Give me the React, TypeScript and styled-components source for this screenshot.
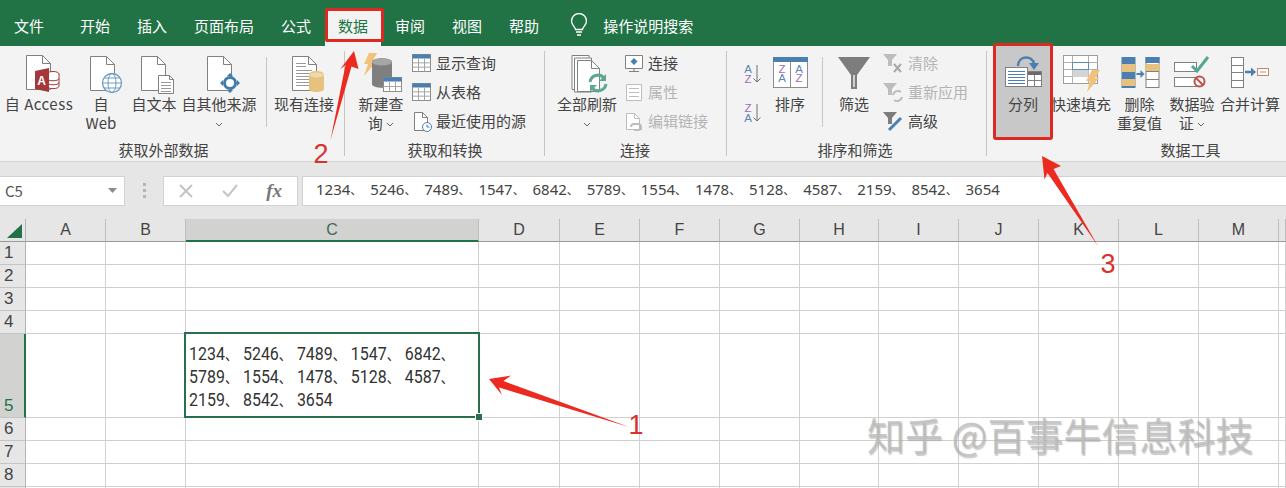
import React from "react";
import styled, { createGlobalStyle } from "styled-components";

const GREEN = "#217346";
const RED = "#dc2a22";
const ARROW = "#ec2a20";
const BLUE = "#4a7fb0";
const GRAY = "#808080";
const FAINT = "#bdbdbd";

const GlobalStyle = createGlobalStyle`
  html, body {
    margin: 0;
    padding: 0;
    background: #fff;
  }
  body {
    font-family: "Noto Sans CJK SC", "Noto Sans", sans-serif;
    color: #444;
  }
  svg {
    display: block;
    flex: none;
  }
`;

// drawings use page coordinates, the viewBox picks the part of the page they sit on
const Art: React.FC<{ x: number; y: number; w: number; h: number; children: React.ReactNode }> = ({
  x,
  y,
  w,
  h,
  children,
}) => (
  <svg viewBox={`${x} ${y} ${w} ${h}`} width={w} height={h}>
    {children}
  </svg>
);

const BigArt: React.FC<{ cx: number; children: React.ReactNode }> = ({ cx, children }) => (
  <Art x={cx - 30} y={48} w={60} h={46}>
    {children}
  </Art>
);

const SmallArt: React.FC<{ x: number; y: number; children: React.ReactNode }> = ({ x, y, children }) => (
  <Art x={x} y={y} w={22} h={22}>
    {children}
  </Art>
);

const Doc: React.FC<{ x: number; y: number; w: number; h: number; fold?: number; color?: string }> = ({
  x,
  y,
  w,
  h,
  fold = 8,
  color = GRAY,
}) => (
  <g fill="#fff" stroke={color}>
    <path d={`M${x} ${y}h${w - fold}l${fold} ${fold}v${h - fold}h${-w}z`} />
    <path d={`M${x + w - fold} ${y}v${fold}h${fold}`} fill="none" />
  </g>
);

const Lines: React.FC<{ x: number; y: number; w: number; n: number; gap?: number; color?: string }> = ({
  x,
  y,
  w,
  n,
  gap = 3,
  color = "#9a9a9a",
}) => (
  <g stroke={color}>
    {Array.from({ length: n }).map((_, i) => (
      <path key={i} d={`M${x} ${y + i * gap + 0.5}h${w}`} />
    ))}
  </g>
);

const MiniTable: React.FC<{ x: number; y: number; w: number; h: number; cols?: number; rows?: number; head?: number }> = ({
  x,
  y,
  w,
  h,
  cols = 2,
  rows = 3,
  head = 4,
}) => (
  <g>
    <rect x={x} y={y} width={w} height={h} fill="#fff" stroke="#8c8c8c" />
    <rect x={x} y={y} width={w} height={head} fill={BLUE} />
    {Array.from({ length: cols - 1 }).map((_, i) => (
      <path key={i} d={`M${x + ((i + 1) * w) / cols} ${y + head}v${h - head}`} stroke="#a5a5a5" />
    ))}
    {Array.from({ length: rows - 1 }).map((_, i) => (
      <path key={i} d={`M${x} ${y + head + ((i + 1) * (h - head)) / rows}h${w}`} stroke="#a5a5a5" />
    ))}
  </g>
);

const Funnel: React.FC<{ x: number; y: number; color: string }> = ({ x, y, color }) => (
  <g fill={color}>
    <path d={`M${x} ${y}h14l-5 6v6h-4v-6z`} />
  </g>
);

const Caret = () => (
  <svg width="8" height="5" viewBox="0 0 8 5">
    <path d="M1 1l3 3 3-3" fill="none" stroke="#666" />
  </svg>
);

const LetterPair: React.FC<{ x: number; y: number; top: string; bottom: string; topColor: string; bottomColor: string }> = ({
  x,
  y,
  top,
  bottom,
  topColor,
  bottomColor,
}) => (
  <g fontFamily="Liberation Sans, sans-serif" fontSize="11.500" textAnchor="middle">
    <text x={x} y={y + 9} fill={topColor}>
      {top}
    </text>
    <text x={x} y={y + 18.500} fill={bottomColor}>
      {bottom}
    </text>
  </g>
);

const SortSmall: React.FC<{ y: number; top: string; bottom: string; topColor: string; bottomColor: string }> = ({
  y,
  top,
  bottom,
  topColor,
  bottomColor,
}) => (
  <Art x={741} y={y} w={24} h={22}>
    <LetterPair x={748} y={y + 1} top={top} bottom={bottom} topColor={topColor} bottomColor={bottomColor} />
    <path d={`M757 ${y + 2}v17M753.5 ${y + 15.5}l3.5 3.5 3.5-3.5`} fill="none" stroke="#707070" />
  </Art>
);

const numbers = [
  "1234", "5246", "7489", "1547", "6842", "5789", "1554",
  "1478", "5128", "4587", "2159", "8542", "3654",
];
const columns = [
  { name: "A", width: 80 },
  { name: "B", width: 80 },
  { name: "C", width: 293 },
  { name: "D", width: 81 },
  { name: "E", width: 80 },
  { name: "F", width: 80 },
  { name: "G", width: 80 },
  { name: "H", width: 79 },
  { name: "I", width: 80 },
  { name: "J", width: 80 },
  { name: "K", width: 80 },
  { name: "L", width: 80 },
  { name: "M", width: 80 },
  { name: "", width: 7 },
];
const rows = [
  { name: "1", height: 23 },
  { name: "2", height: 23 },
  { name: "3", height: 23 },
  { name: "4", height: 23 },
  { name: "5", height: 84 },
  { name: "6", height: 23 },
  { name: "7", height: 23 },
  { name: "8", height: 23 },
  { name: "", height: 23 },
];
const tabs = ["开始", "插入", "页面布局", "公式", "数据", "审阅", "视图", "帮助"];

const Numbers: React.FC<{ items: string[]; trailing?: boolean; gap: number }> = ({ items, trailing, gap }) => (
  <>
    {items.map((n, i) => (
      <React.Fragment key={n}>
        {n}
        {(trailing || i < items.length - 1) && <Sep $w={gap}>、</Sep>}
      </React.Fragment>
    ))}
  </>
);

const App: React.FC = () => (
  <Page>
    <GlobalStyle />
    <TabBar>
      <FileTab>文件</FileTab>
      {tabs.map((t) => (
        <Tab key={t} $active={t === "数据"}>
          {t}
        </Tab>
      ))}
      <SearchHint>
        <svg width="18" height="24" viewBox="0 0 18 24">
          <path
            d="M5.5 16.5C5 13.5 1.5 12 1.5 8a7.5 7.5 0 0 1 15 0c0 4-3.500 5.500-4 8.500z"
            fill="none"
            stroke="#fff"
            strokeWidth="1.300"
          />
          <path d="M6 19h6M7 22h4" stroke="#fff" strokeWidth="1.300" />
        </svg>
        操作说明搜索
      </SearchHint>
    </TabBar>

    <Ribbon>
      <Group $w={345}>
        <GroupBody>
          <BigButton $w={78}>
            <BigArt cx={39}>
              <Doc x={26.5} y={55.5} w={24} h={34} />
              <g fill="#fff" stroke="#a4373a">
                <ellipse cx="53" cy="74" rx="6" ry="2.500" />
                <path d="M47 74v12c0 3.500 12 3.500 12 0V74M47 78.500c0 3 12 3 12 0M47 82.500c0 3 12 3 12 0" />
              </g>
              <path d="M35 71l14-3v24l-14-3z" fill="#a4373a" />
              <text x="41.500" y="85" fill="#fff" fontFamily="Liberation Sans, sans-serif" fontWeight="700" fontSize="12" textAnchor="middle">
                A
              </text>
            </BigArt>
            <WideLabel>自 Access</WideLabel>
          </BigButton>
          <BigButton $w={46}>
            <BigArt cx={101}>
              <Doc x={90.5} y={56.5} w={24} h={34} />
              <circle cx="112" cy="83" r="9.500" fill="#fff" stroke="#6f9cc4" strokeWidth="1.300" />
              <ellipse cx="112" cy="83" rx="4" ry="9.500" fill="none" stroke="#6f9cc4" />
              <path d="M102.500 83h19M104 78h16M104 88h16" stroke="#6f9cc4" />
            </BigArt>
            <Label>
              自<br />
              Web
            </Label>
          </BigButton>
          <BigButton $w={60}>
            <BigArt cx={154}>
              <Doc x={141.5} y={56.5} w={24} h={34} />
              <Doc x={158.5} y={75.5} w={15} h={18} fold={4} />
              <Lines x={161} y={82} w={10} n={4} />
            </BigArt>
            <Label>自文本</Label>
          </BigButton>
          <BigButton $w={70}>
            <BigArt cx={219}>
              <Doc x={207.5} y={56.5} w={24} h={34} />
              <circle cx="230" cy="83" r="5.500" fill="#fff" stroke="#3f7cac" strokeWidth="3" />
              <path d="M230 73l-3 3h6zM230 93l-3-3h6zM220 83l3-3v6zM240 83l-3-3v6z" fill="#3f7cac" />
            </BigArt>
            <Label>
              自其他来源
              <br />
              <Caret />
            </Label>
          </BigButton>
          <InnerDivider $left={12} />
          <BigButton $w={74}>
            <BigArt cx={303}>
              <Doc x={291.5} y={56.5} w={24} h={34} />
              <Lines x={295} y={63} w={10} n={2} />
              <Lines x={295} y={70} w={16} n={6} />
              <path d="M308 75c0-5.500 15-5.500 15 0v14c0 4-15 4-15 0z" fill="#e6c27e" />
              <ellipse cx="315.500" cy="75" rx="7.500" ry="2.500" fill="#f0d9a8" />
            </BigArt>
            <Label>现有连接</Label>
          </BigButton>
        </GroupBody>
        <GroupLabel $shift={-9}>获取外部数据</GroupLabel>
      </Group>

      <Group $w={200}>
        <GroupBody>
          <BigButton $w={48} $left={12}>
            <BigArt cx={381}>
              <path d="M369 53h8l-5 9h4l-12 14 4-12h-4z" fill="#f2c27a" />
              <path d="M372 62c0-5 20-5 20 0v22c0 5-20 5-20 0z" fill="#7f7f7f" />
              <ellipse cx="382" cy="62" rx="10" ry="3.500" fill="#a6a6a6" />
              <MiniTable x={383.5} y={77.5} w={18} h={14} cols={3} rows={2} />
            </BigArt>
            <Label>
              新建查
              <br />询 <Caret />
            </Label>
          </BigButton>
          <SmallColumn $left={5}>
            <SmallButton>
              <SmallArt x={410} y={53}>
                <MiniTable x={412.5} y={54.5} w={18} h={17} cols={3} rows={3} />
              </SmallArt>
              显示查询
            </SmallButton>
            <SmallButton>
              <SmallArt x={410} y={82}>
                <MiniTable x={412.5} y={83.5} w={18} h={17} cols={3} rows={3} />
              </SmallArt>
              从表格
            </SmallButton>
            <SmallButton>
              <SmallArt x={410} y={111}>
                <Doc x={414.5} y={112.5} w={13} h={18} fold={5} />
                <circle cx="427" cy="127" r="4.500" fill="#fff" stroke={BLUE} />
                <path d="M427 124.500v2.500h2.500" fill="none" stroke={BLUE} />
              </SmallArt>
              最近使用的源
            </SmallButton>
          </SmallColumn>
        </GroupBody>
        <GroupLabel $shift={0}>获取和转换</GroupLabel>
      </Group>

      <Group $w={182}>
        <GroupBody>
          <BigButton $w={60} $left={12}>
            <BigArt cx={587}>
              <g fill="#fff" stroke={GRAY}>
                <path d="M572 55.500h17v34h-17z" />
                <path d="M574.500 58h17v34h-17z" />
              </g>
              <Doc x={577.500} y={60.500} w={22} h={31} />
              <path d="M590 82a8 8 0 0 1 14-4M606 84a8 8 0 0 1-14 4" fill="none" stroke="#5ea893" strokeWidth="3" />
              <path d="M606 74v7h-7zM590 92v-7h7z" fill="#5ea893" />
            </BigArt>
            <Label>
              全部刷新
              <br />
              <Caret />
            </Label>
          </BigButton>
          <SmallColumn $left={5}>
            <SmallButton>
              <SmallArt x={622} y={52}>
                <path d="M625.500 54.500h17v13h-17z" fill="#fff" stroke={GRAY} />
                <path d="M629 70.500h10M634 67.500v3" stroke={GRAY} />
                <path d="M634 57l3.500 3.500-3.500 3.500-3.500-3.500z" fill={BLUE} />
              </SmallArt>
              连接
            </SmallButton>
            <SmallButton $disabled>
              <SmallArt x={622} y={81}>
                <path d="M626.500 83.500h15v16h-15z" fill="#fff" stroke={FAINT} />
                <Lines x={629} y={87} w={10} n={3} gap={4} color={FAINT} />
              </SmallArt>
              属性
            </SmallButton>
            <SmallButton $disabled>
              <SmallArt x={622} y={110}>
                <Doc x={626.5} y={112.5} w={13} h={16} fold={5} color={FAINT} />
                <path d="M631 126a3 3 0 0 1 3-3h4a3 3 0 0 1 0 6h-4M639 128h3" fill="none" stroke={FAINT} strokeWidth="2" />
              </SmallArt>
              编辑链接
            </SmallButton>
          </SmallColumn>
        </GroupBody>
        <GroupLabel $shift={-1}>连接</GroupLabel>
      </Group>

      <Group $w={260}>
        <GroupBody>
          <SortColumn>
            <SortSmall y={63} top="A" bottom="Z" topColor="#5b87b5" bottomColor="#9a6fb0" />
            <SortSmall y={102} top="Z" bottom="A" topColor="#9a6fb0" bottomColor="#5b87b5" />
          </SortColumn>
          <BigButton $w={50}>
            <BigArt cx={790}>
              <rect x="773.500" y="57.500" width="34" height="30" fill="#fff" stroke="#8c8c8c" />
              <rect x="773" y="57" width="35" height="5" fill={BLUE} />
              <path d="M790.500 62v25" stroke="#8c8c8c" />
              <LetterPair x={782} y={63.500} top="Z" bottom="A" topColor="#9a6fb0" bottomColor="#5b87b5" />
              <LetterPair x={799} y={63.500} top="A" bottom="Z" topColor="#5b87b5" bottomColor="#9a6fb0" />
            </BigArt>
            <Label>排序</Label>
          </BigButton>
          <InnerDivider $left={7} />
          <BigButton $w={48} $left={7}>
            <BigArt cx={854}>
              <path d="M838 57h32l-13 18v14h-6V75z" fill="#7d7d7d" />
              <path d="M853 75h2v12h-2z" fill="#d0d0d0" />
            </BigArt>
            <Label>筛选</Label>
          </BigButton>
          <SmallColumn $left={4}>
            <SmallButton $disabled>
              <SmallArt x={884} y={53}>
                <Funnel x={885} y={54} color={FAINT} />
                <path d="M896 64l7 8M903 64l-7 8" stroke="#a9a9a9" strokeWidth="2" />
              </SmallArt>
              清除
            </SmallButton>
            <SmallButton $disabled>
              <SmallArt x={884} y={82}>
                <Funnel x={885} y={83} color={FAINT} />
                <path d="M895 95a5 5 0 0 1 8-3M904 97a5 5 0 0 1-8 3" fill="none" stroke={FAINT} strokeWidth="2" />
              </SmallArt>
              重新应用
            </SmallButton>
            <SmallButton>
              <SmallArt x={884} y={111}>
                <Funnel x={885} y={112} color="#7d7d7d" />
                <path d="M891 130l12-12" stroke={BLUE} strokeWidth="3" />
              </SmallArt>
              高级
            </SmallButton>
          </SmallColumn>
        </GroupBody>
        <GroupLabel $shift={-2}>排序和筛选</GroupLabel>
      </Group>

      <LastGroup>
        <GroupBody>
          <MarkedButton $w={58}>
            <BigArt cx={1023}>
              <rect x="1005.500" y="67.500" width="22" height="19" fill="#fff" stroke={GRAY} />
              <Lines x={1008} y={71} w={17} n={5} color={BLUE} />
              <rect x="1027.500" y="71.500" width="14" height="15" fill="#fff" stroke={GRAY} />
              <rect x="1028" y="72" width="13" height="3" fill="#6b6b6b" />
              <path d="M1034.500 75v11M1028 80.500h13" stroke={GRAY} />
              <path d="M1018 66c0-11 15-11 16-2" fill="none" stroke={BLUE} strokeWidth="2.500" />
              <path d="M1029 63h10l-5 7z" fill={BLUE} />
            </BigArt>
            <Label>分列</Label>
          </MarkedButton>
          <BigButton $w={58}>
            <BigArt cx={1081}>
              <rect x="1063.500" y="55.500" width="34" height="28" fill="#fff" stroke="#9c9c9c" />
              <path d="M1063.500 62.500h34M1063.500 69.500h34M1063.500 76.500h34M1072.500 55.500v28M1088.500 55.500v28" stroke="#b0b0b0" />
              <rect x="1072.500" y="62.500" width="16" height="7" fill="#fff" stroke="#5f8fb8" />
              <rect x="1072.500" y="70" width="16" height="7" fill="#d4d4d4" />
              <path d="M1092 70h8l-5 8h4l-12 14 3-11h-4z" fill="#f2c27a" />
            </BigArt>
            <Label>快速填充</Label>
          </BigButton>
          <BigButton $w={57} $left={1}>
            <BigArt cx={1139.500}>
              <rect x="1121" y="57" width="14" height="31" fill={BLUE} />
              <rect x="1121" y="64" width="14" height="8" fill="#e6c27e" />
              <rect x="1121" y="79" width="14" height="7" fill="#e6c27e" />
              <rect x="1145.500" y="57.500" width="13" height="30" fill="#fff" stroke={GRAY} />
              <rect x="1145" y="57" width="14" height="6" fill={BLUE} />
              <rect x="1145" y="64" width="14" height="7" fill="#e6c27e" />
              <path d="M1145.500 71.500h13M1145.500 79.500h13" stroke={GRAY} />
              <path d="M1136 74h5" stroke={BLUE} strokeWidth="2" />
              <path d="M1140 70l4 4-4 4z" fill={BLUE} />
            </BigArt>
            <Label>
              删除
              <br />
              重复值
            </Label>
          </BigButton>
          <BigButton $w={48}>
            <BigArt cx={1192}>
              <rect x="1174.500" y="62.500" width="22" height="9" fill="#fff" stroke={GRAY} />
              <rect x="1174.500" y="77.500" width="22" height="9" fill="#fff" stroke={GRAY} />
              <path d="M1192 66l5 5 11-14" fill="none" stroke="#57a68e" strokeWidth="3" />
              <circle cx="1199.500" cy="81.500" r="5" fill="#fff" stroke="#c0504d" strokeWidth="2" />
              <path d="M1196 78l7 7" stroke="#c0504d" strokeWidth="2" />
            </BigArt>
            <Label>
              数据验
              <br />证 <Caret />
            </Label>
          </BigButton>
          <BigButton $w={60} $left={4}>
            <BigArt cx={1250}>
              <rect x="1231.500" y="57.500" width="12" height="30" fill="#fff" stroke={GRAY} />
              <path d="M1231.500 65.500h12M1231.500 72.500h12M1231.500 80.500h12" stroke={GRAY} />
              <path d="M1245 72h7" stroke={BLUE} strokeWidth="2.500" />
              <path d="M1251 67.500l5 4.500-5 4.500z" fill={BLUE} />
              <rect x="1257.500" y="68.500" width="11" height="7" fill="#fff" stroke="#c8876a" />
              <path d="M1260 72h6" stroke="#c8876a" />
            </BigArt>
            <Label>合并计算</Label>
          </BigButton>
        </GroupBody>
        <GroupLabel $shift={54}>数据工具</GroupLabel>
      </LastGroup>
    </Ribbon>

    <FormulaBar>
      <NameBox>
        C5
        <svg width="9" height="5" viewBox="0 0 9 5">
          <path d="M0 0h9L4.500 5z" fill="#8a8a8a" />
        </svg>
      </NameBox>
      <Grip>
        <i />
        <i />
        <i />
      </Grip>
      <FxBox>
        <svg width="16" height="16" viewBox="0 0 16 16">
          <path d="M2 2l12 12M14 2L2 14" stroke="#c4c4c4" strokeWidth="2" />
        </svg>
        <svg width="18" height="16" viewBox="0 0 18 16">
          <path d="M2 8l5 5L16 2" fill="none" stroke="#c4c4c4" strokeWidth="2" />
        </svg>
        <FxGlyph>fx</FxGlyph>
      </FxBox>
      <FormulaInput>
        <Numbers items={numbers} gap={19.8} />
      </FormulaInput>
    </FormulaBar>

    <Sheet>
      <Corner>
        <svg width="25" height="22" viewBox="0 0 25 22">
          <path d="M22 5v14H7z" fill={GREEN} />
        </svg>
      </Corner>
      {columns.map((c) => (
        <ColumnHead key={c.name || "end"} $selected={c.name === "C"}>
          {c.name}
        </ColumnHead>
      ))}
      {rows.map((r) => (
        <React.Fragment key={r.name || "end"}>
          <RowHead $selected={r.name === "5"}>{r.name}</RowHead>
          {columns.map((c) =>
            r.name === "5" && c.name === "C" ? (
              <ActiveCell key={c.name}>
                <CellLine>
                  <Numbers items={numbers.slice(0, 5)} trailing gap={21.5} />
                </CellLine>
                <CellLine>
                  <Numbers items={numbers.slice(5, 10)} trailing gap={21.5} />
                </CellLine>
                <CellLine>
                  <Numbers items={numbers.slice(10)} gap={21.5} />
                </CellLine>
                <FillHandle />
              </ActiveCell>
            ) : (
              <Cell key={c.name || "end"} />
            )
          )}
        </React.Fragment>
      ))}
    </Sheet>

    <Annotations viewBox="0 0 1286 488" width="1286" height="488">
      <g fill={ARROW}>
        <path d="M354 51l4.500 18-7-2.500-21 73.500 15-75-5.500 4.500z" />
        <path d="M1042 156l19 10-7.500 3 44.500 77-50.500-73-3 6.500z" />
        <path d="M489 379l22-3.500-7.500 5.500 125.500 46-130-39.500 3 7.500z" />
      </g>
      <g fill="#d8322c" fontFamily="Liberation Sans, sans-serif" fontSize="27" textAnchor="middle">
        <text x="321" y="163">2</text>
        <text x="1108" y="273">3</text>
        <text x="636" y="434">1</text>
      </g>
    </Annotations>
    <Watermark>知乎 @百事牛信息科技</Watermark>
  </Page>
);

export default App;

const Page = styled.div`
  position: relative;
  width: 1286px;
  height: 488px;
  overflow: hidden;
  background: #fff;
`;

const TabBar = styled.div`
  display: flex;
  align-items: flex-end;
  gap: 1px;
  height: 46px;
  background: ${GREEN};
  font-size: 15px;
  color: #fff;
`;

const Tab = styled.div<{ $active?: boolean }>`
  position: relative;
  display: flex;
  justify-content: center;
  padding: 0 13px;
  height: 36px;
  line-height: 31px;
  background: ${(p) => (p.$active ? "#f3f3f3" : "transparent")};
  color: ${(p) => (p.$active ? GREEN : "#fff")};
  &::after {
    content: "";
    display: ${(p) => (p.$active ? "block" : "none")};
    position: absolute;
    left: 0;
    top: -2px;
    width: 53px;
    height: 28px;
    border: 3px solid ${RED};
    border-radius: 2px;
  }
`;

const FileTab = styled(Tab)`
  width: 58px;
  padding: 0;
  margin-right: 8px;
`;

const SearchHint = styled.div`
  display: flex;
  align-items: center;
  gap: 15px;
  height: 36px;
  margin-left: 17px;
  padding-bottom: 6px;
  box-sizing: border-box;
`;

const Ribbon = styled.div`
  display: flex;
  height: 116px;
  box-sizing: border-box;
  padding-bottom: 1px;
  background: #f3f3f3;
  border-bottom: 1px solid #d4d4d4;
  font-size: 15px;
  line-height: 19px;
`;

const Group = styled.div<{ $w: number }>`
  position: relative;
  display: flex;
  flex-direction: column;
  flex: none;
  width: ${(p) => p.$w}px;
  &::after {
    content: "";
    position: absolute;
    right: 0;
    top: 5px;
    bottom: 4px;
    width: 1px;
    background: #c6c6c6;
  }
`;

const LastGroup = styled(Group).attrs({ $w: 299 })`
  &::after {
    display: none;
  }
`;

const GroupBody = styled.div`
  display: flex;
  height: 94px;
`;

const GroupLabel = styled.div<{ $shift: number }>`
  height: 19px;
  text-align: center;
  transform: translateX(${(p) => p.$shift}px);
  color: #444;
`;

const BigButton = styled.div<{ $w: number; $left?: number }>`
  display: flex;
  flex-direction: column;
  align-items: center;
  flex: none;
  width: ${(p) => p.$w}px;
  margin-left: ${(p) => p.$left ?? 0}px;
  padding-top: 2px;
  box-sizing: border-box;
  overflow: visible;
  & > svg {
    margin: 0 -20px;
  }
`;

const MarkedButton = styled(BigButton)`
  position: relative;
  margin-left: 7px;
  background: #c8c8c8;
  &::after {
    content: "";
    position: absolute;
    left: -1px;
    top: -3px;
    right: -1px;
    bottom: 0;
    border: 3px solid ${RED};
    border-radius: 3px;
  }
`;

const Label = styled.div`
  text-align: center;
  white-space: nowrap;
  color: #444;
  & svg {
    display: inline-block;
    vertical-align: middle;
  }
`;

const WideLabel = styled(Label)`
  letter-spacing: 0.5px;
`;

const InnerDivider = styled.div<{ $left: number }>`
  flex: none;
  width: 1px;
  height: 70px;
  margin: 11px 0 0 ${(p) => p.$left}px;
  background: #c6c6c6;
`;

const SmallColumn = styled.div<{ $left: number }>`
  display: flex;
  flex-direction: column;
  margin-left: ${(p) => p.$left}px;
  padding-top: 2px;
`;

const SortColumn = styled.div`
  display: flex;
  flex-direction: column;
  gap: 17px;
  margin-left: 14px;
  padding-top: 17px;
`;

const SmallButton = styled.div<{ $disabled?: boolean }>`
  display: flex;
  align-items: center;
  gap: 4px;
  height: 29px;
  white-space: nowrap;
  color: ${(p) => (p.$disabled ? "#b4b4b4" : "#444")};
  & > svg {
    margin-top: 2px;
  }
`;

const FormulaBar = styled.div`
  display: flex;
  align-items: center;
  gap: 4px;
  height: 57px;
  box-sizing: border-box;
  background: #e6e6e6;
`;

const Box = styled.div`
  display: flex;
  align-items: center;
  height: 30px;
  box-sizing: border-box;
  background: #fff;
  border: 1px solid #d2d2d2;
`;

const NameBox = styled(Box)`
  justify-content: space-between;
  width: 125px;
  padding: 0 7px 0 5px;
  border-left: none;
  font-size: 15px;
  color: #555;
`;

const Grip = styled.div`
  display: flex;
  flex-direction: column;
  gap: 3px;
  margin: 0 13px 0 14px;
  & > i {
    display: block;
    width: 3px;
    height: 3px;
    background: #b5b5b5;
  }
`;

const FxBox = styled(Box)`
  justify-content: space-between;
  width: 135px;
  padding: 0 15px 0 14px;
`;

const FxGlyph = styled.span`
  font-family: "Liberation Serif", serif;
  font-style: italic;
  font-weight: 700;
  font-size: 19px;
  color: #777;
`;

const FormulaInput = styled.div`
  display: block;
  flex: 1;
  height: 30px;
  box-sizing: border-box;
  padding-left: 13px;
  background: #fff;
  border: 1px solid #d2d2d2;
  border-right: none;
  font-family: "Noto Sans", sans-serif;
  font-size: 15px;
  line-height: 25px;
  color: #444;
  white-space: nowrap;
`;

const Sep = styled.span<{ $w: number }>`
  display: inline-block;
  width: ${(p) => p.$w}px;
  font-size: 0.8em;
  line-height: 1;
  font-family: "Noto Sans CJK SC", sans-serif;
`;

const Sheet = styled.div`
  display: grid;
  grid-template-columns: 26px ${columns.map((c) => `${c.width}px`).join(" ")};
  grid-template-rows: 23px ${rows.map((r) => `${r.height}px`).join(" ")};
`;

const Corner = styled.div`
  background: #e6e6e6;
  border-right: 1px solid #b4b4b4;
  border-bottom: 1px solid #9a9a9a;
  box-sizing: border-box;
`;

const ColumnHead = styled.div<{ $selected?: boolean }>`
  display: flex;
  align-items: center;
  justify-content: center;
  box-sizing: border-box;
  background: ${(p) => (p.$selected ? "#d2d3d1" : "#e6e6e6")};
  border-right: 1px solid #bdbdbd;
  border-bottom: ${(p) => (p.$selected ? `2px solid ${GREEN}` : "1px solid #9a9a9a")};
  font-family: "Liberation Sans", sans-serif;
  font-size: 16px;
  color: ${(p) => (p.$selected ? "#3f6a55" : "#444")};
`;

const RowHead = styled.div<{ $selected?: boolean }>`
  display: flex;
  align-items: flex-end;
  padding-left: 4px;
  box-sizing: border-box;
  background: ${(p) => (p.$selected ? "#d2d3d1" : "#e6e6e6")};
  border-right: ${(p) => (p.$selected ? `2px solid ${GREEN}` : "1px solid #b4b4b4")};
  border-bottom: 1px solid #c4c4c4;
  font-family: "Liberation Sans", sans-serif;
  font-size: 17px;
  line-height: 22px;
  color: ${(p) => (p.$selected ? GREEN : "#444")};
`;

const Cell = styled.div`
  box-sizing: border-box;
  border-right: 1px solid #d0d0d0;
  border-bottom: 1px solid #d0d0d0;
`;

const ActiveCell = styled.div`
  position: relative;
  display: flex;
  flex-direction: column;
  justify-content: flex-end;
  margin: -2px -1px 0 -2px;
  padding: 0 0 5px 3px;
  border: 2px solid #2b6e4f;
  z-index: 1;
`;

const CellLine = styled.div`
  height: 23px;
  line-height: 23px;
  font-family: Roboto, sans-serif;
  font-size: 19px;
  color: #333;
  white-space: nowrap;
  transform: scaleX(0.84);
  transform-origin: left center;
`;

const FillHandle = styled.div`
  position: absolute;
  right: -5px;
  bottom: -5px;
  width: 6px;
  height: 6px;
  background: #2b6e4f;
  border: 1px solid #fff;
`;

const Annotations = styled.svg`
  position: absolute;
  left: 0;
  top: 0;
  pointer-events: none;
`;

const Watermark = styled.div`
  position: absolute;
  left: 867px;
  top: 408px;
  font-size: 38px;
  line-height: 52px;
  white-space: nowrap;
  color: rgba(185, 185, 185, 0.8);
  text-shadow: 1px 2px 1px rgba(140, 140, 140, 0.45);
`;
